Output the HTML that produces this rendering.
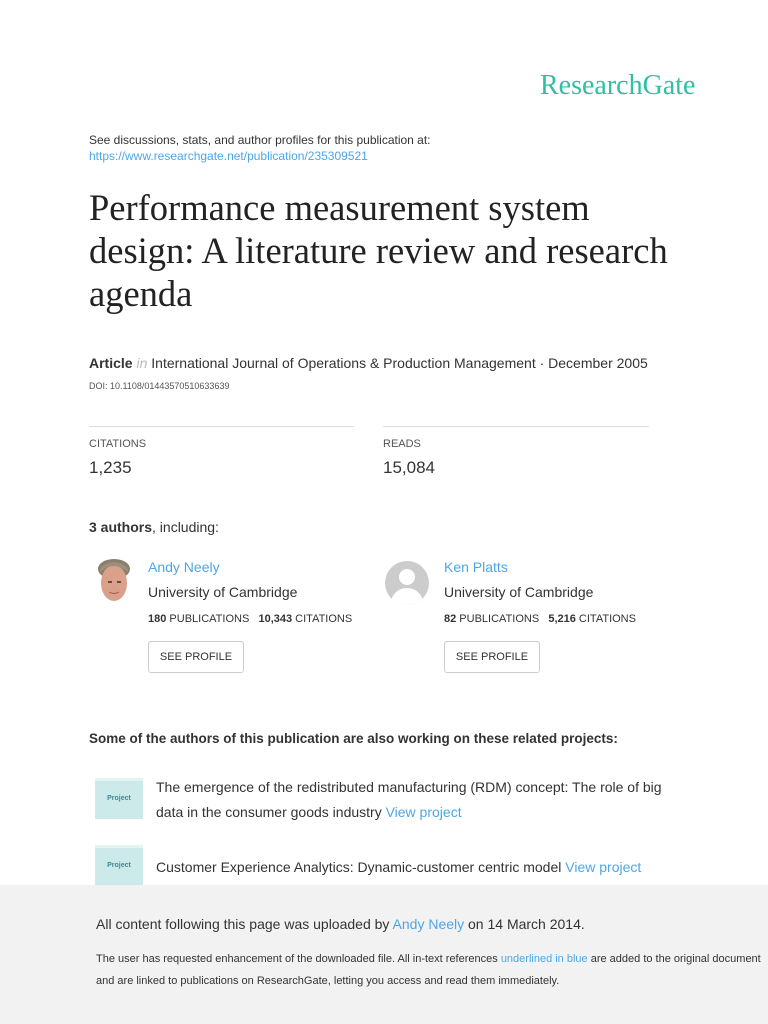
<!DOCTYPE html>
<html><head><meta charset="utf-8"><style>
body{margin:0;width:768px;height:1024px;background:#fff;position:relative;overflow:hidden;font-family:"Liberation Sans",sans-serif;color:#333}
.a{position:absolute;white-space:nowrap}
.blue{color:#4ca7e6}
.logo{left:540px;top:70px;font-family:"Liberation Serif",serif;font-size:28px;color:#2ebfa5}
.title{left:89px;top:186px;font-family:"Liberation Serif",serif;font-size:36.5px;line-height:43px;color:#222}
.rule{position:absolute;height:1px;background:#ddd;top:426px}
.small{font-size:11px;color:#555}
.btn{position:absolute;width:94px;height:30px;border:1px solid #ccc;border-radius:3px;font-size:11px;text-align:center;line-height:30px;color:#333}
.proj{position:absolute;left:95px;width:48px;height:38px;background:#cdeaea;border-top:3px solid #e3f4f4;font-size:7px;font-weight:bold;color:#3a8a9a;text-align:center;line-height:36px}
.foot{position:absolute;left:0;top:885px;width:768px;height:139px;background:#f2f2f2}
</style></head><body>
<div class="a logo">ResearchGate</div>
<div class="a" style="left:89px;top:133px;font-size:12px">See discussions, stats, and author profiles for this publication at:</div>
<div class="a blue" style="left:89px;top:149px;font-size:12px">https://www.researchgate.net/publication/235309521</div>
<div class="a title">Performance measurement system<br>design: A literature review and research<br>agenda</div>
<div class="a" style="left:89px;top:355px;font-size:14px"><b>Article</b> <i style="color:#bbb">in</i> International Journal of Operations &amp; Production Management · December 2005</div>
<div class="a" style="left:89px;top:381px;font-size:9px;color:#555">DOI: 10.1108/01443570510633639</div>
<div class="rule" style="left:89px;width:265px"></div>
<div class="rule" style="left:383px;width:266px"></div>
<div class="a small" style="left:89px;top:438px">CITATIONS</div>
<div class="a small" style="left:383px;top:438px">READS</div>
<div class="a" style="left:89px;top:458px;font-size:17px">1,235</div>
<div class="a" style="left:383px;top:458px;font-size:17px">15,084</div>
<div class="a" style="left:89px;top:519px;font-size:14px"><b>3 authors</b>, including:</div>
<svg class="a" style="left:94px;top:559px" width="40" height="48" viewBox="0 0 40 48">
<ellipse cx="20" cy="10" rx="16" ry="10" fill="#8a7d6a"/>
<ellipse cx="20" cy="24" rx="13" ry="18" fill="#d9a08a"/>
<path d="M5 14 Q20 0 35 14 L33 8 Q20 -2 7 8Z" fill="#9a8e7c"/>
<rect x="14" y="22" width="4" height="2" fill="#6a4a3a"/><rect x="23" y="22" width="4" height="2" fill="#6a4a3a"/>
<path d="M15 33 Q20 36 25 33" stroke="#9a5a4a" fill="none"/>
</svg>
<div class="a blue" style="left:148px;top:559px;font-size:14px">Andy Neely</div>
<div class="a" style="left:148px;top:584px;font-size:14px">University of Cambridge</div>
<div class="a" style="left:148px;top:613px;font-size:11px"><b>180</b> PUBLICATIONS &nbsp; <b>10,343</b> CITATIONS</div>
<div class="btn" style="left:148px;top:641px">SEE PROFILE</div>
<div class="a" style="left:385px;top:561px;width:44px;height:44px;border-radius:50%;background:#ccc;overflow:hidden"><div style="position:absolute;left:14px;top:8px;width:16px;height:16px;border-radius:50%;background:#fff"></div><div style="position:absolute;left:6px;top:27px;width:32px;height:30px;border-radius:50%;background:#fff"></div></div>
<div class="a blue" style="left:444px;top:559px;font-size:14px">Ken Platts</div>
<div class="a" style="left:444px;top:584px;font-size:14px">University of Cambridge</div>
<div class="a" style="left:444px;top:613px;font-size:11px"><b>82</b> PUBLICATIONS &nbsp; <b>5,216</b> CITATIONS</div>
<div class="btn" style="left:444px;top:641px">SEE PROFILE</div>
<div class="a" style="left:89px;top:731px;font-size:13.5px;font-weight:bold">Some of the authors of this publication are also working on these related projects:</div>
<div class="proj" style="top:778px">Project</div>
<div class="a" style="left:156px;top:779px;font-size:14px">The emergence of the redistributed manufacturing (RDM) concept: The role of big</div>
<div class="a" style="left:156px;top:804px;font-size:14px">data in the consumer goods industry <span class="blue">View project</span></div>
<div class="proj" style="top:845px">Project</div>
<div class="a" style="left:156px;top:859px;font-size:14px">Customer Experience Analytics: Dynamic-customer centric model <span class="blue">View project</span></div>
<div class="foot"></div>
<div class="a" style="left:96px;top:916px;font-size:14px">All content following this page was uploaded by <span class="blue">Andy Neely</span> on 14 March 2014.</div>
<div class="a" style="left:96px;top:953px;font-size:11px">The user has requested enhancement of the downloaded file. All in-text references <span class="blue">underlined in blue</span> are added to the original document</div>
<div class="a" style="left:96px;top:975px;font-size:11px">and are linked to publications on ResearchGate, letting you access and read them immediately.</div>
</body></html>
